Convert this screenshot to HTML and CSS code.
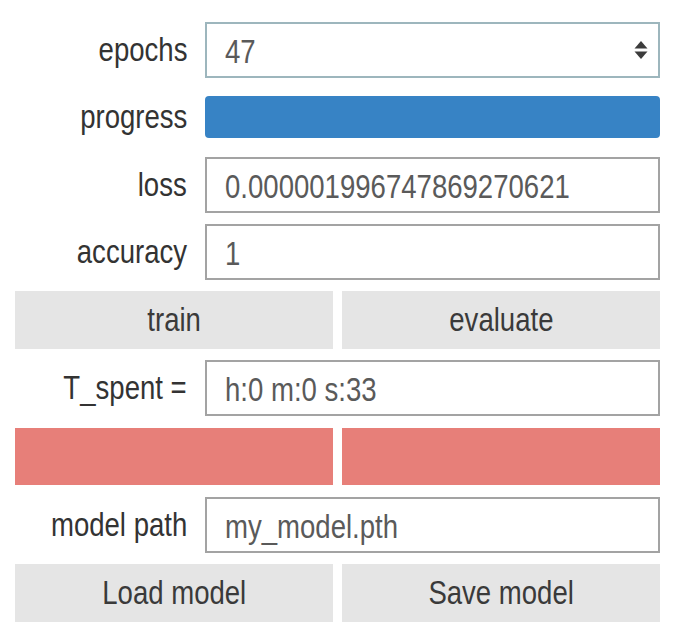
FILE: index.html
```html
<!DOCTYPE html>
<html>
<head>
<meta charset="utf-8">
<link rel="stylesheet" href="styles.css">
</head>
<body>
<div class="panel">
  <div class="row">
    <label class="lbl"><span class="tx tx-r">epochs</span></label>
    <div class="field field-focus">
      <span class="tx tx-l val">47</span>
      <svg class="spin" width="14" height="20" viewBox="0 0 14 20"><path d="M7 1 L13.5 8.5 H0.5 Z" fill="#3c3c3c"/><path d="M7 19 L13.5 11.5 H0.5 Z" fill="#3c3c3c"/></svg>
    </div>
  </div>
  <div class="row">
    <label class="lbl"><span class="tx tx-r">progress</span></label>
    <div class="bar"></div>
  </div>
  <div class="row">
    <label class="lbl"><span class="tx tx-r">loss</span></label>
    <div class="field"><span class="tx tx-l val">0.000001996747869270621</span></div>
  </div>
  <div class="row">
    <label class="lbl"><span class="tx tx-r">accuracy</span></label>
    <div class="field"><span class="tx tx-l val">1</span></div>
  </div>
  <div class="pair">
    <button class="btn"><span class="tx">train</span></button>
    <button class="btn"><span class="tx">evaluate</span></button>
  </div>
  <div class="row">
    <label class="lbl"><span class="tx tx-r">T_spent =</span></label>
    <div class="field"><span class="tx tx-l val">h:0 m:0 s:33</span></div>
  </div>
  <div class="pair">
    <button class="btn btn-red"></button>
    <button class="btn btn-red"></button>
  </div>
  <div class="row">
    <label class="lbl"><span class="tx tx-r">model path</span></label>
    <div class="field"><span class="tx tx-l val">my_model.pth</span></div>
  </div>
  <div class="pair">
    <button class="btn"><span class="tx">Load model</span></button>
    <button class="btn"><span class="tx">Save model</span></button>
  </div>
</div>
</body>
</html>
```
FILE: styles.css
```css
html, body {
  margin: 0;
  padding: 0;
  background: #ffffff;
}
body {
  font-family: "Liberation Sans", Arial, sans-serif;
  font-size: 33px;
  color: #333333;
}
.panel {
  width: 645px;
  padding: 22px 0 0 15px;
  display: flex;
  flex-direction: column;
  gap: 11.3px;
}
.tx {
  display: inline-block;
  white-space: nowrap;
  transform: scaleX(0.835);
  transform-origin: center;
}
.tx-r {
  transform-origin: right center;
}
.tx-l {
  transform-origin: left center;
}
.row {
  display: grid;
  grid-template-columns: 172px 455px;
  column-gap: 18px;
  align-items: center;
  height: 56px;
}
.lbl {
  text-align: right;
  color: #333333;
  white-space: nowrap;
}
.field {
  box-sizing: border-box;
  height: 56px;
  border: 2px solid #a3a3a3;
  background: #ffffff;
  display: flex;
  align-items: center;
  justify-content: space-between;
  padding: 4px 10px 0 18px;
}
.field-focus {
  border-color: #9db6bd;
}
.val {
  color: #5a5a5a;
}
.spin {
  display: block;
  margin-top: -4px;
}
.bar {
  height: 42px;
  background: #3783c5;
  border-radius: 4px;
}
.pair {
  display: grid;
  grid-template-columns: 318px 318px;
  column-gap: 9px;
  height: 58px;
}
.btn {
  font: inherit;
  color: #3a3a3a;
  background: #e5e5e5;
  border: none;
  margin: 0;
  padding: 0;
  height: 58px;
}
.btn-red {
  background: #e77f79;
  height: 57px;
}
```
